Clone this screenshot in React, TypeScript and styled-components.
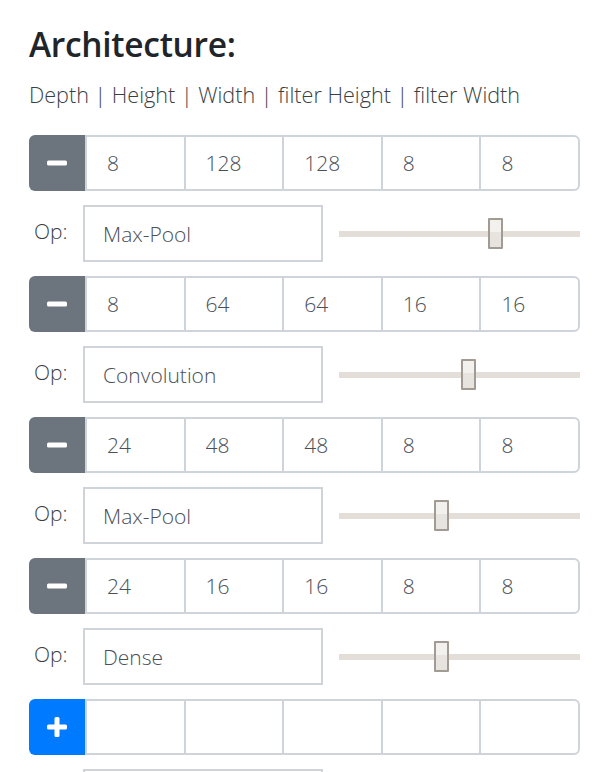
import React from 'react';
import styled, { createGlobalStyle } from 'styled-components';

const GlobalStyle = createGlobalStyle`
  * { box-sizing: border-box; }
  body {
    margin: 0;
    background: #ffffff;
    font-family: "Open Sans", "Noto Sans", sans-serif;
    color: #212529;
  }
`;

const Page = styled.div`
  padding: 22px 23px 0 29px;
  width: 603px;
  height: 772px;
  overflow: hidden;
`;

const Title = styled.h2`
  margin: 0;
  font-size: 33.5px;
  font-weight: 600;
  line-height: 44px;
  letter-spacing: -0.3px;
  color: #212529;
`;

const Subtitle = styled.p`
  margin: 14px 0 25px;
  font-size: 21.6px;
  font-weight: 300;
  line-height: 30px;
  color: #3a3f44;
`;

const Layer = styled.div`
  display: flex;
  flex-direction: column;
  gap: 14px;
  margin-bottom: 14px;
`;

const InputGroup = styled.div`
  display: flex;
  height: 56px;
  width: 551px;
`;

const IconButton = styled.button<{ $variant: 'remove' | 'add' }>`
  flex: 0 0 56px;
  display: flex;
  align-items: center;
  justify-content: center;
  border: none;
  padding: 0;
  border-radius: 6px 0 0 6px;
  background: ${(p) => (p.$variant === 'add' ? '#007bff' : '#6c757d')};
  cursor: pointer;
`;

const DimInput = styled.input`
  flex: 1 1 0;
  min-width: 0;
  height: 100%;
  margin-left: -2px;
  padding: 0 0 0 20px;
  border: 2px solid #ced4da;
  border-radius: 0;
  font-family: "Open Sans", "Noto Sans", sans-serif;
  font-size: 21px;
  font-weight: 300;
  color: #495057;
  background: #fff;
  outline: none;

  &:first-of-type {
    margin-left: 0;
  }

  &:last-of-type {
    border-radius: 0 6px 6px 0;
  }
`;

const OpRow = styled.div`
  display: flex;
  align-items: center;
  height: 57px;
`;

const OpLabel = styled.label`
  flex: 0 0 54px;
  padding-left: 5px;
  margin-top: -6px;
  font-size: 21px;
  font-weight: 300;
  color: #3a3f44;
`;

const OpInput = styled.input`
  width: 240px;
  height: 100%;
  padding: 0 0 0 18px;
  border: 2px solid #ced4da;
  border-radius: 0;
  font-family: "Open Sans", "Noto Sans", sans-serif;
  font-size: 21px;
  font-weight: 300;
  color: #495057;
  outline: none;
`;

const Range = styled.input`
  -webkit-appearance: none;
  appearance: none;
  margin: 0 0 0 16px;
  width: 241px;
  height: 32px;
  background: transparent;
  outline: none;

  &::-webkit-slider-runnable-track {
    height: 6px;
    background: #e3ded8;
    border: none;
  }

  &::-webkit-slider-thumb {
    -webkit-appearance: none;
    width: 15px;
    height: 31px;
    margin-top: -13px;
    border: 2px solid #a19b93;
    border-radius: 1px;
    background: linear-gradient(#f3f1ee 0 45%, #e7e3de 45% 100%);
  }
`;

const MinusIcon = () => (
  <svg width="22" height="8" viewBox="0 0 22 8">
    <rect x="1" y="1.5" width="20" height="5" rx="1.5" fill="#fff" />
  </svg>
);

const PlusIcon = () => (
  <svg width="22" height="22" viewBox="0 0 22 22">
    <rect x="1" y="8.5" width="20" height="5" rx="1.5" fill="#fff" />
    <rect x="8.5" y="1" width="5" height="20" rx="1.5" fill="#fff" />
  </svg>
);

type LayerData = { dims: string[]; op: string; pos: number };

const layers: LayerData[] = [
  { dims: ['8', '128', '128', '8', '8'], op: 'Max-Pool', pos: 66 },
  { dims: ['8', '64', '64', '16', '16'], op: 'Convolution', pos: 54 },
  { dims: ['24', '48', '48', '8', '8'], op: 'Max-Pool', pos: 42 },
  { dims: ['24', '16', '16', '8', '8'], op: 'Dense', pos: 42 },
];

export default function App() {
  return (
    <>
      <GlobalStyle />
      <Page>
        <Title>Architecture:</Title>
        <Subtitle>Depth | Height | Width | filter Height | filter Width</Subtitle>
        {layers.map((layer, i) => (
          <Layer key={i}>
            <InputGroup>
              <IconButton $variant="remove" aria-label="remove layer">
                <MinusIcon />
              </IconButton>
              {layer.dims.map((d, j) => (
                <DimInput key={j} defaultValue={d} />
              ))}
            </InputGroup>
            <OpRow>
              <OpLabel>Op:</OpLabel>
              <OpInput defaultValue={layer.op} />
              <Range type="range" min={0} max={100} defaultValue={layer.pos} />
            </OpRow>
          </Layer>
        ))}
        <Layer>
          <InputGroup>
            <IconButton $variant="add" aria-label="add layer">
              <PlusIcon />
            </IconButton>
            {[0, 1, 2, 3, 4].map((j) => (
              <DimInput key={j} defaultValue="" />
            ))}
          </InputGroup>
          <OpRow>
            <OpLabel>Op:</OpLabel>
            <OpInput defaultValue="" />
          </OpRow>
        </Layer>
      </Page>
    </>
  );
}
